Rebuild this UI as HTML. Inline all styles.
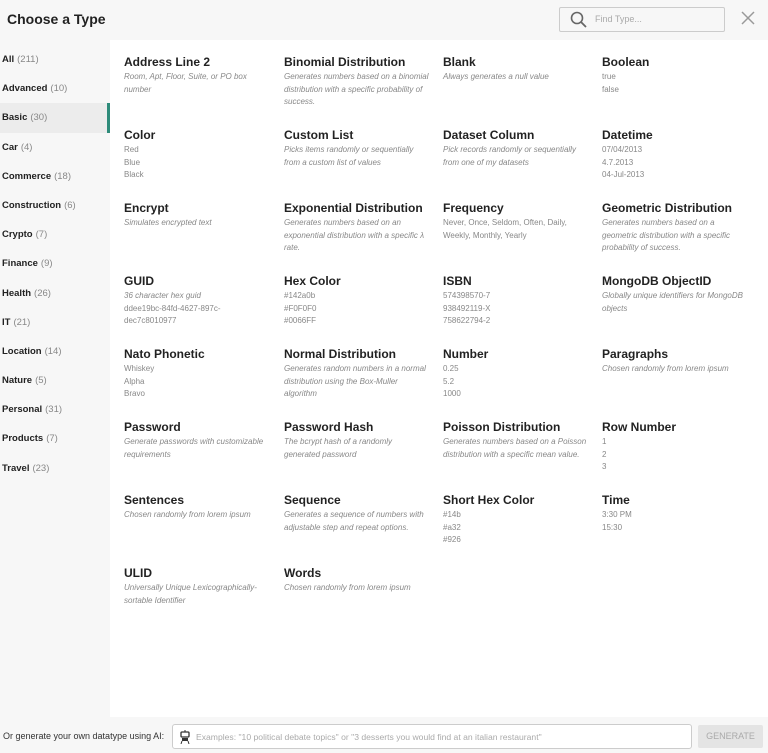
<!DOCTYPE html>
<html><head><meta charset="utf-8"><style>
*{margin:0;padding:0;box-sizing:border-box}
body{width:768px;height:753px;background:#f7f7f7;font-family:"Liberation Sans",sans-serif;position:relative;overflow:hidden;color:#222}
.h{position:absolute;left:7px;top:11px;font-size:14px;font-weight:bold;color:#222}
.search{position:absolute;left:559px;top:7px;width:166px;height:25px;border:1px solid #ccc;border-radius:2px;background:#f7f7f7}
.search span{position:absolute;left:35px;top:6px;font-size:9px;color:#aaa}
.x{position:absolute;left:740px;top:10px}
.side{position:absolute;left:0;top:45px;width:110px}
.side div{height:29.2px;line-height:29.2px;padding-left:2px;font-size:9.5px;font-weight:bold;color:#222}
.side div span{font-weight:normal;color:#888;margin-left:3px}
.side .sel{background:#ececec;border-right:3px solid #2e8b7a}
.main{position:absolute;left:110px;top:40px;width:658px;height:677px;background:#fff}
.it{position:absolute;width:148px}
.it b{display:block;font-size:12px;color:#222;margin-bottom:2px}
.it p{font-size:8px;line-height:12.5px;color:#888;font-style:italic}
.it p.n{font-style:normal}
.foot{position:absolute;left:0;top:717px;width:768px;height:36px;background:#f7f7f7}
.foot .l{position:absolute;left:3px;top:14px;font-size:9px;color:#333}
.inp{position:absolute;left:172px;top:7px;width:520px;height:25px;border:1px solid #ccc;border-radius:3px;background:#fff}
.inp span{position:absolute;left:23px;top:7px;font-size:8.6px;color:#aaa}
.btn{position:absolute;left:698px;top:8px;width:65px;height:23px;background:#e4e4e4;color:#aaa;font-size:9px;text-align:center;line-height:23px;border-radius:2px}
</style></head><body>
<div class="h">Choose a Type</div>
<div class="search"><svg width="20" height="20" style="position:absolute;left:9px;top:2px" viewBox="0 0 20 20"><circle cx="8" cy="8" r="5.5" fill="none" stroke="#666" stroke-width="1.6"/><line x1="12" y1="12" x2="17" y2="17" stroke="#666" stroke-width="1.8"/></svg><span>Find Type...</span></div>
<svg class="x" width="16" height="16" viewBox="0 0 16 16"><path d="M2 2L14 14M14 2L2 14" stroke="#999" stroke-width="1.5"/></svg>
<div class="side">
<div>All<span>(211)</span></div><div>Advanced<span>(10)</span></div><div class="sel">Basic<span>(30)</span></div><div>Car<span>(4)</span></div><div>Commerce<span>(18)</span></div><div>Construction<span>(6)</span></div><div>Crypto<span>(7)</span></div><div>Finance<span>(9)</span></div><div>Health<span>(26)</span></div><div>IT<span>(21)</span></div><div>Location<span>(14)</span></div><div>Nature<span>(5)</span></div><div>Personal<span>(31)</span></div><div>Products<span>(7)</span></div><div>Travel<span>(23)</span></div>
</div>
<div class="main">
<div class="it" style="left:14px;top:15px"><b>Address Line 2</b><p>Room, Apt, Floor, Suite, or PO box<br>number</p></div>
<div class="it" style="left:174px;top:15px"><b>Binomial Distribution</b><p>Generates numbers based on a binomial distribution with a specific probability of success.</p></div>
<div class="it" style="left:333px;top:15px"><b>Blank</b><p>Always generates a null value</p></div>
<div class="it" style="left:492px;top:15px"><b>Boolean</b><p class="n">true<br>false</p></div>

<div class="it" style="left:14px;top:88px"><b>Color</b><p class="n">Red<br>Blue<br>Black</p></div>
<div class="it" style="left:174px;top:88px"><b>Custom List</b><p>Picks items randomly or sequentially<br>from a custom list of values</p></div>
<div class="it" style="left:333px;top:88px"><b>Dataset Column</b><p>Pick records randomly or sequentially<br>from one of my datasets</p></div>
<div class="it" style="left:492px;top:88px"><b>Datetime</b><p class="n">07/04/2013<br>4.7.2013<br>04-Jul-2013</p></div>

<div class="it" style="left:14px;top:161px"><b>Encrypt</b><p>Simulates encrypted text</p></div>
<div class="it" style="left:174px;top:161px"><b>Exponential Distribution</b><p>Generates numbers based on an<br>exponential distribution with a specific λ<br>rate.</p></div>
<div class="it" style="left:333px;top:161px"><b>Frequency</b><p class="n">Never, Once, Seldom, Often, Daily,<br>Weekly, Monthly, Yearly</p></div>
<div class="it" style="left:492px;top:161px"><b>Geometric Distribution</b><p>Generates numbers based on a<br>geometric distribution with a specific<br>probability of success.</p></div>

<div class="it" style="left:14px;top:234px"><b>GUID</b><p>36 character hex guid</p><p class="n">ddee19bc-84fd-4627-897c-<br>dec7c8010977</p></div>
<div class="it" style="left:174px;top:234px"><b>Hex Color</b><p class="n">#142a0b<br>#F0F0F0<br>#0066FF</p></div>
<div class="it" style="left:333px;top:234px"><b>ISBN</b><p class="n">574398570-7<br>938492119-X<br>758622794-2</p></div>
<div class="it" style="left:492px;top:234px"><b>MongoDB ObjectID</b><p>Globally unique identifiers for MongoDB<br>objects</p></div>

<div class="it" style="left:14px;top:307px"><b>Nato Phonetic</b><p class="n">Whiskey<br>Alpha<br>Bravo</p></div>
<div class="it" style="left:174px;top:307px"><b>Normal Distribution</b><p>Generates random numbers in a normal<br>distribution using the Box-Muller<br>algorithm</p></div>
<div class="it" style="left:333px;top:307px"><b>Number</b><p class="n">0.25<br>5.2<br>1000</p></div>
<div class="it" style="left:492px;top:307px"><b>Paragraphs</b><p>Chosen randomly from lorem ipsum</p></div>

<div class="it" style="left:14px;top:380px"><b>Password</b><p>Generate passwords with customizable<br>requirements</p></div>
<div class="it" style="left:174px;top:380px"><b>Password Hash</b><p>The bcrypt hash of a randomly<br>generated password</p></div>
<div class="it" style="left:333px;top:380px"><b>Poisson Distribution</b><p>Generates numbers based on a Poisson<br>distribution with a specific mean value.</p></div>
<div class="it" style="left:492px;top:380px"><b>Row Number</b><p class="n">1<br>2<br>3</p></div>

<div class="it" style="left:14px;top:453px"><b>Sentences</b><p>Chosen randomly from lorem ipsum</p></div>
<div class="it" style="left:174px;top:453px"><b>Sequence</b><p>Generates a sequence of numbers with<br>adjustable step and repeat options.</p></div>
<div class="it" style="left:333px;top:453px"><b>Short Hex Color</b><p class="n">#14b<br>#a32<br>#926</p></div>
<div class="it" style="left:492px;top:453px"><b>Time</b><p class="n">3:30 PM<br>15:30</p></div>

<div class="it" style="left:14px;top:526px"><b>ULID</b><p>Universally Unique Lexicographically-<br>sortable Identifier</p></div>
<div class="it" style="left:174px;top:526px"><b>Words</b><p>Chosen randomly from lorem ipsum</p></div>
</div>
<div class="foot">
<div class="l">Or generate your own datatype using AI:</div>
<div class="inp"><svg width="12" height="14" style="position:absolute;left:6px;top:5px" viewBox="0 0 12 14"><rect x="2" y="2" width="8" height="5" rx="1" fill="none" stroke="#333" stroke-width="1.3"/><line x1="6" y1="0" x2="6" y2="2" stroke="#333"/><rect x="3" y="8" width="6" height="3" fill="#333"/><path d="M3 11L2 14M9 11L10 14" stroke="#333"/></svg><span>Examples: "10 political debate topics" or "3 desserts you would find at an italian restaurant"</span></div>
<div class="btn">GENERATE</div>
</div>
</body></html>
